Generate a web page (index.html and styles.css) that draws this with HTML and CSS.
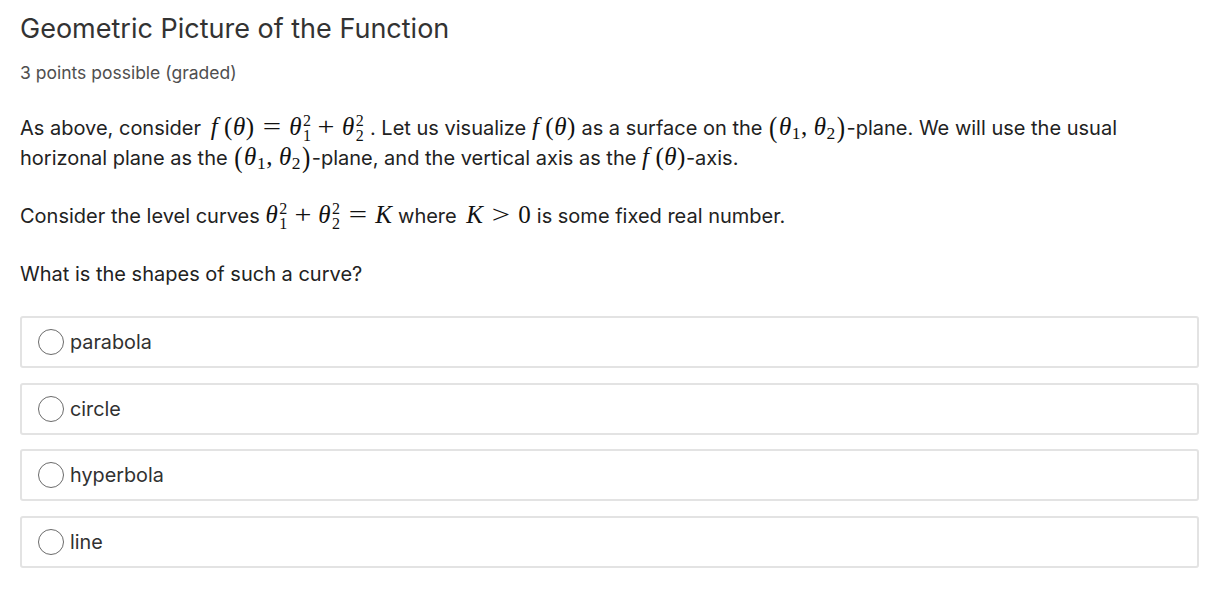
FILE: index.html
```html
<!DOCTYPE html>
<html>
<head>
<meta charset="utf-8">
<link rel="stylesheet" href="styles.css">
</head>
<body>
<div class="page">
  <h2 class="title">Geometric Picture of the Function</h2>
  <div class="points">3 points possible (graded)</div>

  <p class="para">As above, consider <span class="m m-lead"><i>f</i><span class="sp"></span>(<i>θ</i>)<span class="rel">=</span><i>θ</i><span class="ss"><span class="s2">2</span><span class="s1">1</span></span><span class="bin">+</span><i>θ</i><span class="ss"><span class="s2">2</span><span class="s1">2</span></span></span> . Let us visualize <span class="m"><i>f</i><span class="sp"></span>(<i>θ</i>)</span> as a surface on the <span class="m"><span class="bp">(</span><i>θ</i><span class="sb">1</span><span class="cm">,</span><i>θ</i><span class="sb">2</span><span class="bp">)</span></span>-plane. We will use the usual horizonal plane as the <span class="m"><span class="bp">(</span><i>θ</i><span class="sb">1</span><span class="cm">,</span><i>θ</i><span class="sb">2</span><span class="bp">)</span></span>-plane, and the vertical axis as the <span class="m"><i>f</i><span class="sp"></span>(<i>θ</i>)</span>-axis.</p>

  <p class="para">Consider the level curves <span class="m"><i>θ</i><span class="ss"><span class="s2">2</span><span class="s1">1</span></span><span class="bin">+</span><i>θ</i><span class="ss"><span class="s2">2</span><span class="s1">2</span></span><span class="rel">=</span><i>K</i></span> where <span class="m m-lead"><i>K</i><span class="rel">&gt;</span>0</span> is some fixed real number.</p>

  <p class="para">What is the shapes of such a curve?</p>

  <div class="options">
    <label class="opt"><span class="radio"></span><span class="lbl">parabola</span></label>
    <label class="opt"><span class="radio"></span><span class="lbl">circle</span></label>
    <label class="opt"><span class="radio"></span><span class="lbl">hyperbola</span></label>
    <label class="opt"><span class="radio"></span><span class="lbl">line</span></label>
  </div>
</div>
</body>
</html>
```

FILE: styles.css
```css
html, body {
  margin: 0;
  padding: 0;
  background: #ffffff;
}
body {
  font-family: Inter, "Noto Sans", sans-serif;
  color: #222222;
}
.page {
  padding: 13px 21px 0 20px;
}
.title {
  margin: 0;
  font-size: 27px;
  line-height: 32px;
  font-weight: 400;
  color: #333333;
}
.points {
  margin-top: 18px;
  font-size: 17.5px;
  line-height: 20px;
  color: #4f4f4f;
}
.para {
  margin: 28px 0 0 0;
  font-size: 20px;
  line-height: 30px;
  color: #222222;
}
.points + .para {
  margin-top: 30px;
}
.m {
  font-family: "Liberation Serif", "DejaVu Serif", serif;
  font-size: 25px;
  line-height: 20px;
  letter-spacing: 0.5px;
  color: #111111;
  white-space: nowrap;
}
.m-lead {
  margin-left: 4px;
}
.m i {
  font-style: italic;
}
.sp {
  display: inline-block;
  width: 6px;
}
.rel {
  display: inline-block;
  margin: 0 10px;
  transform: scaleX(1.3);
}
.bin {
  display: inline-block;
  margin: 0 8px;
  transform: scaleX(1.2);
}
.cm {
  display: inline-block;
  margin-right: 6px;
}
.bp {
  display: inline-block;
  transform: scaleY(1.2);
  margin: 0 1px;
}
.sb {
  font-size: 0.7em;
  vertical-align: -0.2em;
}
.ss {
  display: inline-block;
  font-size: 16px;
  line-height: 15px;
  vertical-align: -6px;
  margin-left: 1px;
}
.ss > span {
  display: block;
}
.options {
  margin-top: 27px;
  display: flex;
  flex-direction: column;
  gap: 14.6px;
}
.opt {
  display: flex;
  align-items: center;
  height: 48px;
  border: 2px solid #e3e3e3;
  border-radius: 3px;
  padding-left: 16px;
}
.radio {
  border: 1px solid #6b6b6b;
  border-radius: 50%;
  box-sizing: border-box;
  flex: none;
  width: 26px;
  height: 26px;
}
.lbl {
  margin-left: 6px;
  font-size: 19.8px;
  color: #313131;
}
```
